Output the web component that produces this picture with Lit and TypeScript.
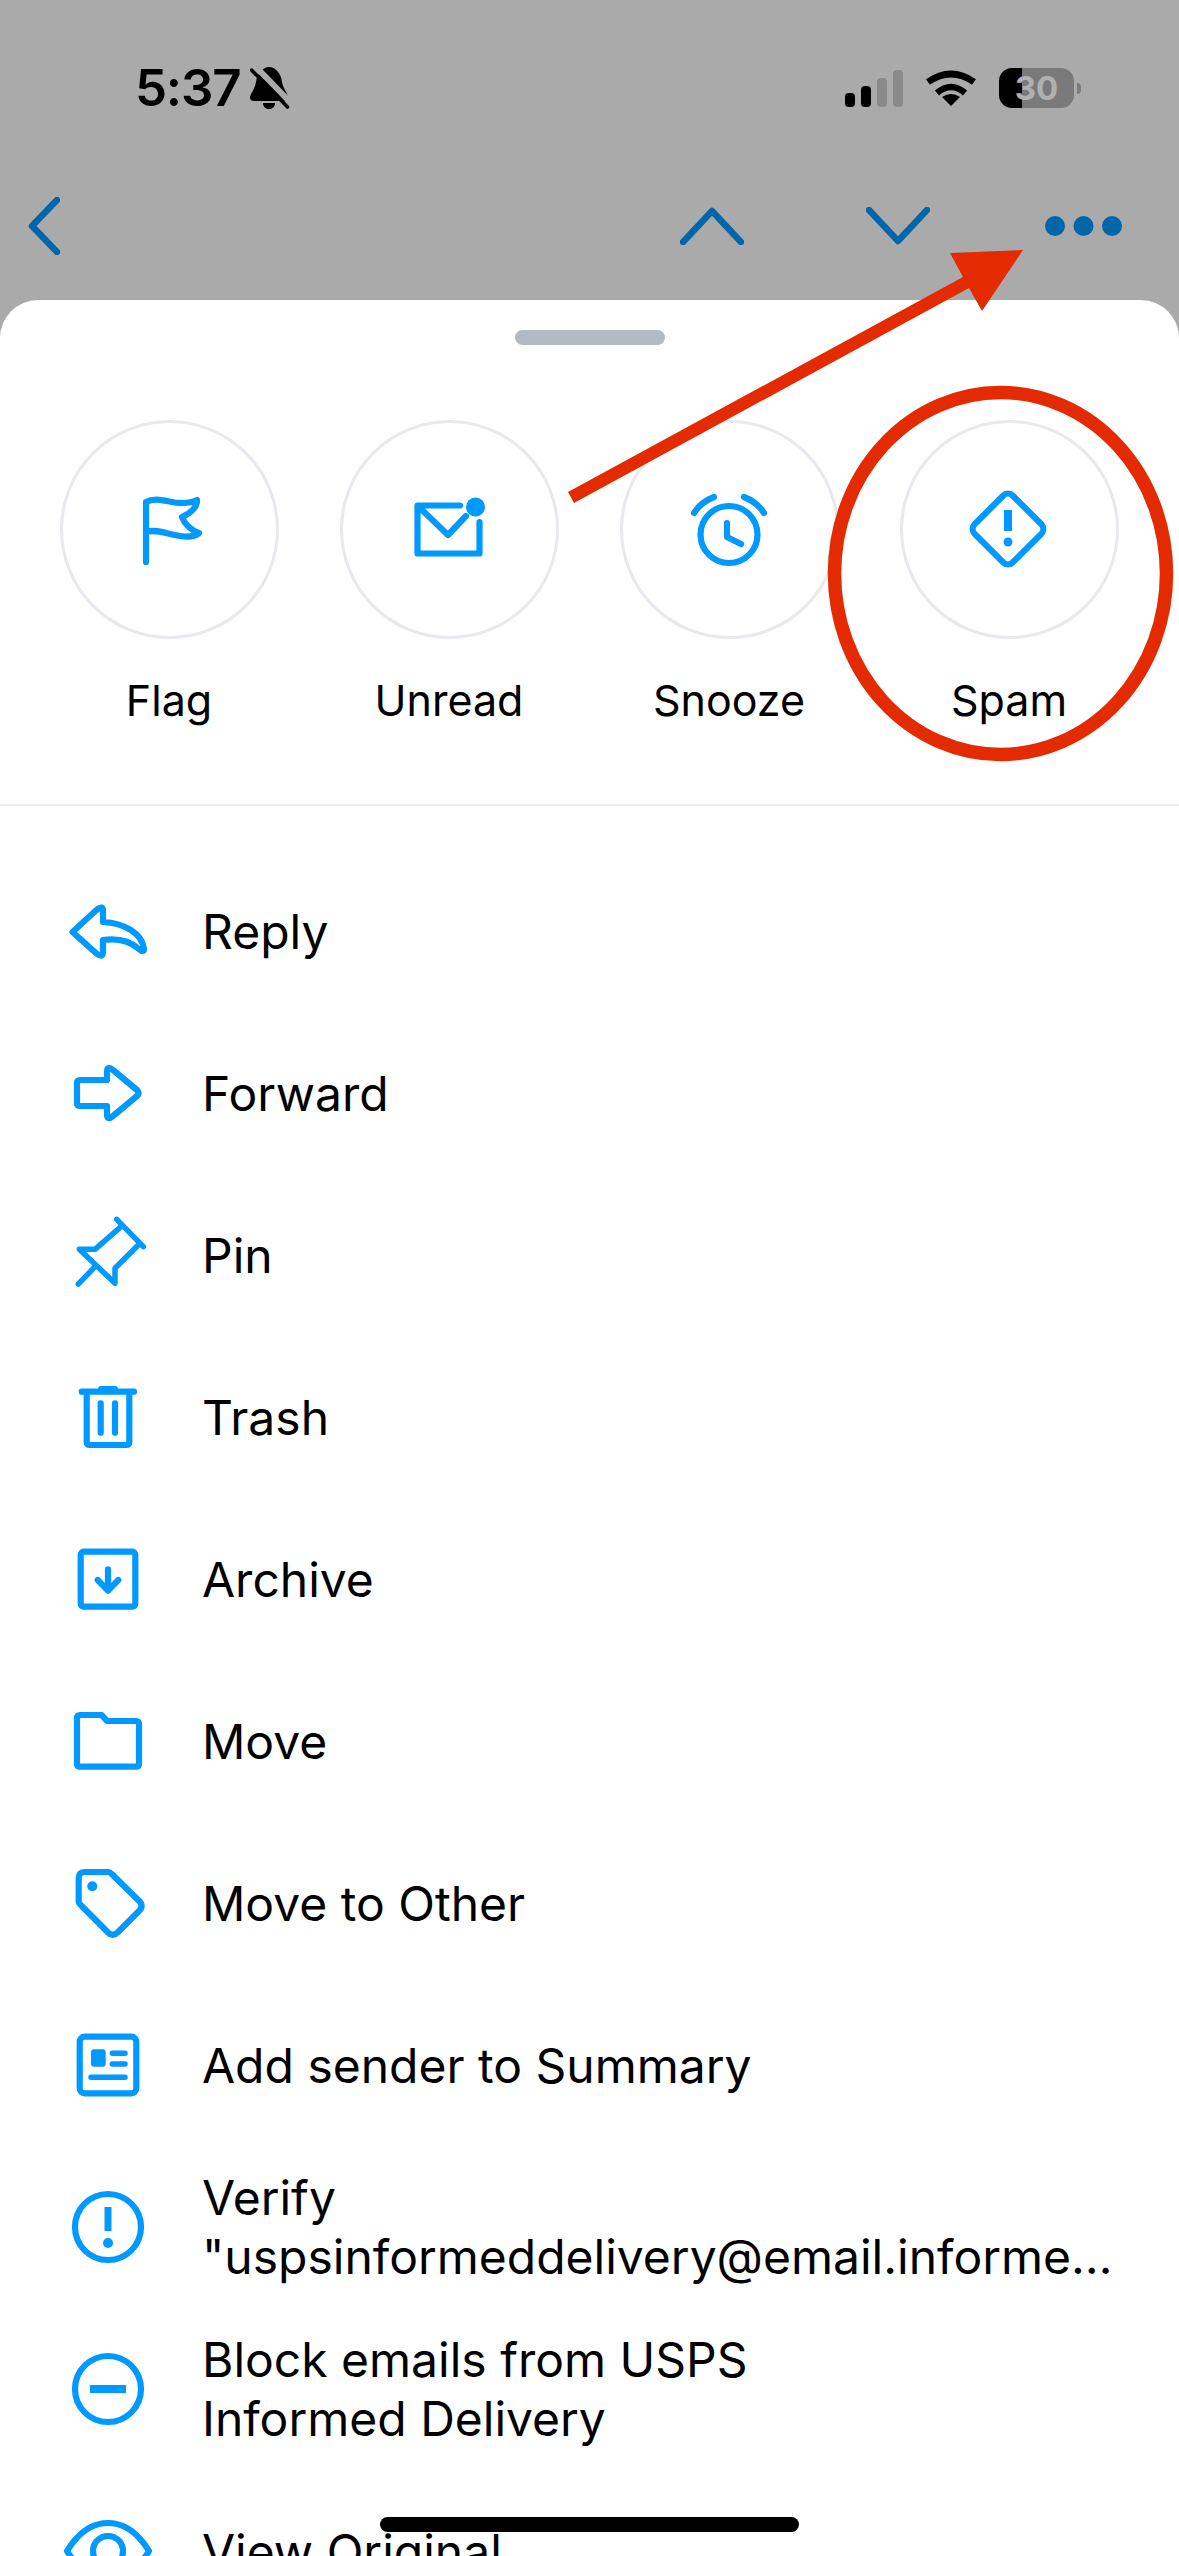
import { LitElement, css, html, svg } from 'lit';
import { customElement } from 'lit/decorators.js';

const actions = [
  {
    label: "Flag",
    icon: svg`<path d="M-23 32V-28C-14 -33 -4 -29 6 -27.5C14 -26.5 22 -27 28 -30C28 -23 22 -17 13 -13C16 -5 22 0 30 3C24 8 14 7 6 5C-4 3 -14 -1 -23 2"/>`,
  },
  {
    label: "Unread",
    icon: svg`<path d="M11 -24.5H-31.5V23.5H30.5V-8M-29 -22L-1 5L17 -14"/><circle class="fill" cx="26.5" cy="-23" r="9.5"/>`,
  },
  {
    label: "Snooze",
    icon: svg`<circle cx="0" cy="4.5" r="28.5"/><path d="M-35 -17Q-28 -28 -15 -33M35 -17Q28 -28 15 -33M-2 -7V7L12 14"/>`,
  },
  {
    label: "Spam",
    icon: svg`<rect x="-28" y="-28" width="54" height="54" rx="7" transform="rotate(45 -1 -1)"/><rect class="fill" x="-5" y="-20" width="8" height="21"/><circle class="fill" cx="-1" cy="12" r="4.5"/>`,
  },
];

const rows = [
  {
    lines: ["Reply"],
    icon: svg`<path d="M14.5 51L39 28.5Q45 24 45 30V41C66 42 84 52 86 68Q86 72 81 68C72 60 60 57 45 59V71Q45 77 39 73Z"/>`,
  },
  {
    lines: ["Forward"],
    icon: svg`<path d="M22 37H49V29Q49 22 55 27L79 47Q82 50 79 53L55 73Q49 78 49 71V63H22Q19 63 19 60V40Q19 37 22 37Z"/>`,
  },
  {
    lines: ["Pin"],
    icon: svg`<path class="thin" d="M58.7 14.3L85.3 41.7M63 21.7L37 44.3H21.3L57 78.3V63.3L80.3 40M37 61.7L20.3 79"/>`,
  },
  {
    lines: ["Trash"],
    icon: svg`<path d="M23.7 24.7H76M28.7 25V75Q28.7 78 31.7 78H68.3Q71.3 78 71.3 75V25M42.7 36.3V65.7M57 36.3V65.7"/><rect class="fill" x="40" y="19" width="20" height="6" rx="3"/>`,
  },
  {
    lines: ["Archive"],
    icon: svg`<rect x="22.7" y="22.7" width="54.6" height="55" rx="3"/><path d="M50 40.3V61M39.7 51L50 61.7L60.3 51"/>`,
  },
  {
    lines: ["Move"],
    icon: svg`<path d="M22 24H43.7L49 30H78Q81 30 81 33V72.7Q81 75.7 78 75.7H22Q19 75.7 19 72.7V27Q19 24 22 24Z"/>`,
  },
  {
    lines: ["Move to Other"],
    icon: svg`<path d="M20.7 25.3Q20.7 19 27 19H50.3Q52 19 53.7 21L82 48.7Q86 53.7 80.3 58.7L59.3 79.7Q54.7 84 50.3 79.7L23.7 53Q20.7 50 20.7 48.7Z"/><circle class="fill" cx="34.3" cy="33.3" r="5"/>`,
  },
  {
    lines: ["Add sender to Summary"],
    icon: svg`<rect x="21.7" y="21.7" width="56.6" height="56.6" rx="5"/><rect class="fill" x="33" y="34.3" width="14.7" height="17.4" rx="3"/><path class="thin" d="M54.3 38.3H67M54.3 49H67M33 62.3H67"/>`,
  },
  {
    lines: ['Verify', '"uspsinformeddelivery@email.informe…'],
    icon: svg`<circle cx="50" cy="50" r="33"/><rect class="fill" x="46.5" y="30" width="7" height="24"/><circle class="fill" cx="50" cy="66" r="5"/>`,
  },
  {
    lines: ["Block emails from USPS", "Informed Delivery"],
    icon: svg`<circle cx="50" cy="50" r="33"/><rect class="fill" x="32" y="46" width="36" height="8"/>`,
  },
  {
    lines: ["View Original"],
    icon: svg`<path d="M9 50C20 32 34 22 50 22C66 22 80 32 91 50C80 68 66 78 50 78C34 78 20 68 9 50Z"/><circle cx="50" cy="50" r="15"/>`,
  },
];

@customElement("app-root")
export class AppRoot extends LitElement {

  static get styles() {
    return css`
      :host {
        display: block;
        position: relative;
        width: 1179px;
        height: 2556px;
        overflow: hidden;
        background: #aaaaaa;
        font-family: Inter, "Liberation Sans", sans-serif;
        color: #000;
      }
      .status {
        display: flex;
        align-items: center;
        box-sizing: border-box;
        height: 180px;
        padding: 66px 98px 70px 135px;
      }
      .time {
        font-size: 51px;
        font-weight: 600;
        letter-spacing: -1.2px;
        line-height: 44px;
      }
      .bell {
        margin-left: 10px;
      }
      .signal {
        display: flex;
        align-items: flex-end;
        gap: 6px;
        height: 37px;
        margin-left: auto;
      }
      .signal span {
        width: 10px;
        border-radius: 4px;
        background: #8a8a8a;
      }
      .signal span.on {
        background: #000;
      }
      .wifi {
        margin-left: 22px;
      }
      .battery {
        display: flex;
        align-items: center;
        gap: 3px;
        margin-left: 22px;
      }
      .battery-body {
        width: 75px;
        height: 40px;
        border-radius: 13px;
        background: linear-gradient(to right, #000 23px, #7a7a7a 23px);
        color: #b0b0b0;
        font-size: 33px;
        font-weight: 700;
        line-height: 40px;
        text-align: center;
      }
      .battery-nub {
        width: 4px;
        height: 11px;
        border-radius: 0 6px 6px 0;
        background: #7a7a7a;
      }
      .nav {
        display: flex;
        align-items: center;
        box-sizing: border-box;
        height: 120px;
        padding: 0 57px 28px 28px;
      }
      .nav svg {
        fill: none;
        stroke: #0066aa;
        stroke-width: 6.5;
        stroke-linecap: round;
        stroke-linejoin: round;
      }
      .back {
        margin-right: auto;
      }
      .down {
        margin-left: 122px;
      }
      .dots {
        margin-left: 115px;
      }
      .sheet {
        box-sizing: border-box;
        height: 2256px;
        padding-top: 30px;
        border-radius: 38px 38px 0 0;
        background: #fff;
        overflow: hidden;
      }
      .handle {
        width: 150px;
        height: 15px;
        margin: 0 auto;
        border-radius: 8px;
        background: #b3bac1;
      }
      .actions {
        display: grid;
        grid-template-columns: repeat(4, 280px);
        padding: 75px 0 79px 29px;
        border-bottom: 2px solid #ececf1;
      }
      .action {
        display: flex;
        flex-direction: column;
        align-items: center;
      }
      .circle {
        display: flex;
        align-items: center;
        justify-content: center;
        box-sizing: border-box;
        width: 219px;
        height: 219px;
        border: 3px solid #e8e8ee;
        border-radius: 50%;
      }
      .label {
        margin-top: 36px;
        font-size: 43px;
        line-height: 50px;
      }
      .icon {
        fill: none;
        stroke: #0099ff;
        stroke-width: 6.2;
        stroke-linecap: round;
        stroke-linejoin: round;
      }
      .icon .fill {
        fill: #0099ff;
        stroke: none;
      }
      .icon .thin {
        stroke-width: 5.5;
      }
      .list {
        padding-top: 44px;
      }
      .row {
        display: flex;
        align-items: center;
        gap: 44px;
        height: 162px;
        padding-left: 58px;
      }
      .row .icon {
        flex: none;
      }
      .row-text {
        font-size: 48px;
        line-height: 59px;
        white-space: nowrap;
      }
      .row-text div {
        height: 59px;
      }
      .marks {
        position: absolute;
        left: 0;
        top: 0;
        pointer-events: none;
      }
      .home {
        position: absolute;
        left: 380px;
        top: 2517px;
        width: 419px;
        height: 15px;
        border-radius: 8px;
        background: #000;
      }
    `;
  }

  render() {
    return html`
      <div class="status">
        <span class="time">5:37</span>
        ${this.render_bell()}
        <div class="signal">
          <span class="on" style="height: 14px"></span>
          <span class="on" style="height: 21px"></span>
          <span style="height: 29px"></span>
          <span style="height: 37px"></span>
        </div>
        <svg class="wifi" width="52" height="38" viewBox="0 0 52 38">
          <path fill="none" stroke="#000" stroke-width="7" d="M3 13Q26 -3 49 13"/>
          <path fill="none" stroke="#000" stroke-width="6.5" d="M12 24Q26 12 40 24"/>
          <path d="M17 28Q26 22 35 28L26 37Z"/>
        </svg>
        <div class="battery">
          <div class="battery-body">30</div>
          <div class="battery-nub"></div>
        </div>
      </div>
      <div class="nav">
        <svg class="back" width="32" height="58" viewBox="0 0 32 58">
          <path d="M29 3L4 29L29 55"/>
        </svg>
        <svg width="64" height="38" viewBox="0 0 64 38"><path d="M3 35L32 4L61 35"/></svg>
        <svg class="down" width="64" height="38" viewBox="0 0 64 38"><path d="M3 3L32 34L61 3"/></svg>
        <svg class="dots" width="77" height="20" viewBox="0 0 77 20">
          <circle cx="10" cy="10" r="10" fill="#0066aa" stroke="none"/>
          <circle cx="38.5" cy="10" r="10" fill="#0066aa" stroke="none"/>
          <circle cx="67" cy="10" r="10" fill="#0066aa" stroke="none"/>
        </svg>
      </div>
      <div class="sheet">
        <div class="handle"></div>
        <div class="actions">
          ${actions.map((a) => html`
            <div class="action">
              <div class="circle">
                <svg class="icon" width="80" height="80" viewBox="-40 -40 80 80">${a.icon}</svg>
              </div>
              <span class="label">${a.label}</span>
            </div>
          `)}
        </div>
        <div class="list">
          ${rows.map((r) => html`
            <div class="row">
              <svg class="icon" width="100" height="100" viewBox="0 0 100 100">${r.icon}</svg>
              <div class="row-text">${r.lines.map((l) => html`<div>${l}</div>`)}</div>
            </div>
          `)}
        </div>
      </div>
      <svg class="marks" width="1179" height="2556" viewBox="0 0 1179 2556">
        <polygon fill="#e32a00" points="568,492 963,277 950,253 1023,250 982,311 969,288 574,503"/>
        <ellipse cx="1000.5" cy="573.5" rx="166" ry="181" fill="none" stroke="#e32a00" stroke-width="13.5"/>
      </svg>
      <div class="home"></div>
    `;
  }

  render_bell() {
    return html`
      <svg class="bell" width="40" height="42" viewBox="0 0 40 42">
        <path d="M19 0C25 0 31 6 32 15C33 22 38 26 38 31C38 33 36 34 34 34H4C2 34 0 33 0 31C0 27 5 22 6 15C7 7 13 0 19 0Z"/>
        <path d="M13 36H25C25 40 22 42 19 42C16 42 13 40 13 36Z"/>
        <path d="M6 0L42 37" stroke="#aaaaaa" stroke-width="6" fill="none"/>
        <path d="M1.5 3L37.5 40" stroke="#000" stroke-width="3.5" stroke-linecap="round" fill="none"/>
      </svg>
    `;
  }
}
